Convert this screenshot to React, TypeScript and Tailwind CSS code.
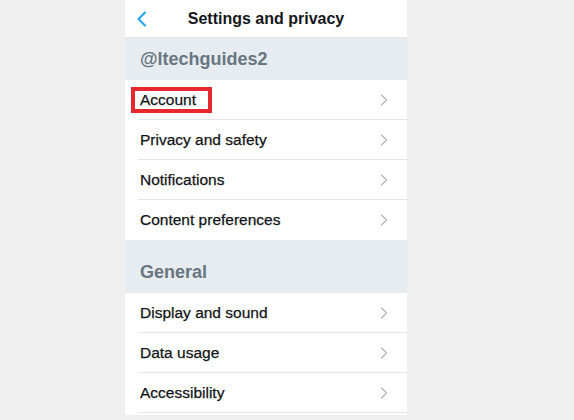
import React from "react";

const Chevron = () => (
  <svg width="8" height="12" viewBox="0 0 8 12" className="shrink-0">
    <path d="M1.5 1 L6.5 6 L1.5 11" fill="none" stroke="#b4b9be" strokeWidth="1.4" strokeLinecap="round" strokeLinejoin="round" />
  </svg>
);

const Row = ({ label, last, boxed }: { label: string; last?: boolean; boxed?: boolean }) => (
  <div className="relative h-[40px] flex items-center pl-[15px]">
    <span className="text-[15.5px] text-[#101316] leading-none [-webkit-text-stroke:0.25px_#101316]">{label}</span>
    <div className="ml-auto mr-[19px] flex items-center">
      <Chevron />
    </div>
    {!last && <div className="absolute left-[13px] right-0 bottom-0 h-px bg-[#e3e6e9]" />}
    {boxed && (
      <div className="absolute left-[6px] top-[7px] w-[81px] h-[26px] border-[4px] border-[#e8262d]" />
    )}
  </div>
);

export default function App() {
  return (
    <div
      className="w-full h-[420px] bg-[#efefef] flex pl-[125px] overflow-hidden"
      style={{ fontFamily: '"Liberation Sans", Arial, sans-serif' }}
    >
      <div className="w-[282px] h-[415px] bg-white flex flex-col">
        <div className="relative h-[38px] flex items-center justify-center border-b border-[#e3e6e9]">
          <svg width="12" height="16" viewBox="0 0 12 16" className="absolute left-[11px] top-[11px]">
            <path d="M9 1.5 L2.5 8 L9 14.5" fill="none" stroke="#1da1f2" strokeWidth="2" strokeLinecap="round" strokeLinejoin="round" />
          </svg>
          <span className="text-[16px] font-bold text-[#14171a] leading-none">Settings and privacy</span>
        </div>
        <div className="h-[42px] bg-[#e6ecf0] flex items-center pl-[15px]">
          <span className="text-[18px] font-bold text-[#687680] leading-none">@ltechguides2</span>
        </div>
        <Row label="Account" boxed />
        <Row label="Privacy and safety" />
        <Row label="Notifications" />
        <Row label="Content preferences" last />
        <div className="h-[53px] pb-[12px] bg-[#e6ecf0] flex items-end pl-[15px]">
          <span className="text-[18px] font-bold text-[#687680] leading-none">General</span>
        </div>
        <Row label="Display and sound" />
        <Row label="Data usage" />
        <Row label="Accessibility" />
      </div>
    </div>
  );
}
